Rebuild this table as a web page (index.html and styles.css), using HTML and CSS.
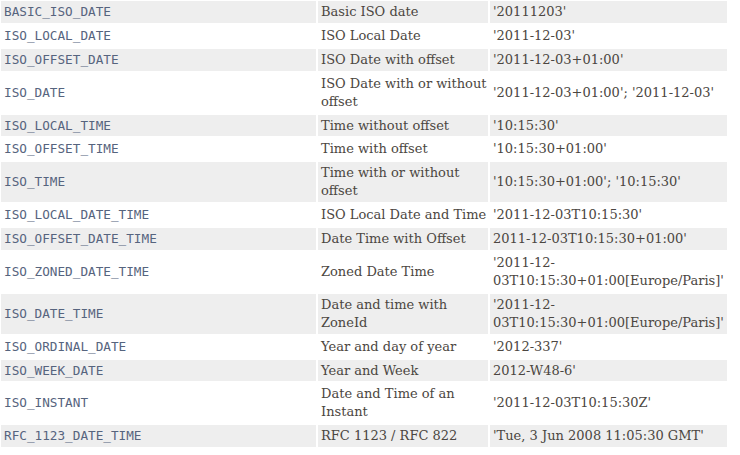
FILE: index.html
```html
<!DOCTYPE html>
<html>
<head>
<meta charset="utf-8">
<link rel="stylesheet" href="styles.css">
</head>
<body>
<table class="fmt">
<colgroup><col class="c1"><col class="c2"><col class="c3"></colgroup>
<tbody>
<tr class="odd"><td class="code">BASIC_ISO_DATE</td><td>Basic ISO date</td><td>'20111203'</td></tr>
<tr><td class="code">ISO_LOCAL_DATE</td><td>ISO Local Date</td><td>'2011-12-03'</td></tr>
<tr class="odd"><td class="code">ISO_OFFSET_DATE</td><td>ISO Date with offset</td><td>'2011-12-03+01:00'</td></tr>
<tr><td class="code">ISO_DATE</td><td>ISO Date with or without<br>offset</td><td>'2011-12-03+01:00'; '2011-12-03'</td></tr>
<tr class="odd"><td class="code">ISO_LOCAL_TIME</td><td>Time without offset</td><td>'10:15:30'</td></tr>
<tr><td class="code">ISO_OFFSET_TIME</td><td>Time with offset</td><td>'10:15:30+01:00'</td></tr>
<tr class="odd"><td class="code">ISO_TIME</td><td>Time with or without<br>offset</td><td>'10:15:30+01:00'; '10:15:30'</td></tr>
<tr><td class="code">ISO_LOCAL_DATE_TIME</td><td>ISO Local Date and Time</td><td>'2011-12-03T10:15:30'</td></tr>
<tr class="odd"><td class="code">ISO_OFFSET_DATE_TIME</td><td>Date Time with Offset</td><td>2011-12-03T10:15:30+01:00'</td></tr>
<tr><td class="code">ISO_ZONED_DATE_TIME</td><td>Zoned Date Time</td><td>'2011-12-<br>03T10:15:30+01:00[Europe/Paris]'</td></tr>
<tr class="odd"><td class="code">ISO_DATE_TIME</td><td>Date and time with<br>ZoneId</td><td>'2011-12-<br>03T10:15:30+01:00[Europe/Paris]'</td></tr>
<tr><td class="code">ISO_ORDINAL_DATE</td><td>Year and day of year</td><td>'2012-337'</td></tr>
<tr class="odd"><td class="code">ISO_WEEK_DATE</td><td>Year and Week</td><td>2012-W48-6'</td></tr>
<tr><td class="code">ISO_INSTANT</td><td>Date and Time of an<br>Instant</td><td>'2011-12-03T10:15:30Z'</td></tr>
<tr class="odd"><td class="code">RFC_1123_DATE_TIME</td><td>RFC 1123 / RFC 822</td><td>'Tue, 3 Jun 2008 11:05:30 GMT'</td></tr>
</tbody>
</table>
</body>
</html>
```
FILE: styles.css
```css
html, body {
  margin: 0;
  padding: 0;
  background: #ffffff;
}
.fmt {
  width: 730px;
  margin: -1px 0 0 -1px;
  table-layout: fixed;
  border-collapse: separate;
  border-spacing: 2px;
  font-family: "DejaVu Serif", serif;
  font-size: 13px;
  line-height: 17.9px;
  color: #4b4641;
}
.c1 { width: 315px; }
.c2 { width: 170px; }
.c3 { width: 237px; }
.fmt td {
  padding: 2px 1px 2px 3px;
  vertical-align: middle;
  white-space: nowrap;
  overflow: hidden;
}
.fmt tr.odd td {
  background: #eeeeee;
}
.fmt td.code {
  font-family: "DejaVu Sans Mono", monospace;
  font-size: 12.7px;
  color: #56647e;
}
```
